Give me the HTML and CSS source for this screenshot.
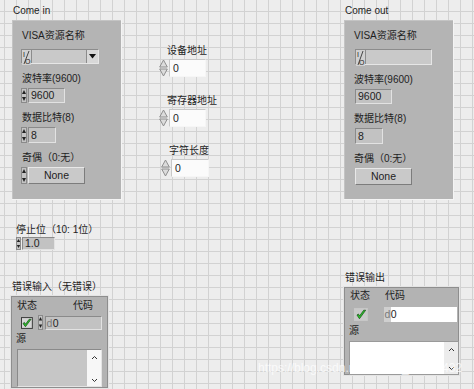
FILE: index.html
```html
<!DOCTYPE html>
<html lang="zh-CN">
<head>
    <meta charset="UTF-8">
    <title>串口设置</title>
    <link rel="stylesheet" href="styles.css">
</head>
<body>
    <div class="panel">

        <!-- Come in -->
        <div class="block come-in">
            <div class="caption">Come in</div>
            <div class="cluster">
                <div class="lbl">VISA资源名称</div>
                <div class="visa">
                    <svg class="io" width="9" height="15" viewBox="0 0 9 15"><text x="1" y="7" font-size="7" font-family="Liberation Sans">I</text><path d="M7 1 L2 14" stroke="#222" stroke-width="0.8"/><text x="3" y="14" font-size="7" font-family="Liberation Sans">O</text></svg>
                    <div class="visa-field"></div>
                    <div class="visa-btn"><svg width="7" height="5" viewBox="0 0 7 5"><path d="M0 0 H7 L3.5 4.5Z" fill="#111"/></svg></div>
                </div>

                <div class="lbl gap">波特率(9600)</div>
                <div class="num">
                    <svg class="spin" width="6" height="15" viewBox="0 0 6 15"><rect x="0.5" y="0.5" width="5" height="14" fill="#c4c4c4" stroke="#8a8a8a"/><path d="M3 2 L5 6 H1Z" fill="#222"/><path d="M3 13 L5 9 H1Z" fill="#222"/></svg>
                    <div class="box w37">9600</div>
                </div>

                <div class="lbl gap">数据比特(8)</div>
                <div class="num">
                    <svg class="spin" width="6" height="16" viewBox="0 0 6 16"><rect x="0.5" y="0.5" width="5" height="15" fill="#c4c4c4" stroke="#8a8a8a"/><path d="M3 2 L5 6 H1Z" fill="#222"/><path d="M3 14 L5 10 H1Z" fill="#222"/></svg>
                    <div class="box w28 h16">8</div>
                </div>

                <div class="lbl gap">奇偶（0:无）</div>
                <div class="num">
                    <svg class="spin" width="6" height="17" viewBox="0 0 6 17"><rect x="0.5" y="0.5" width="5" height="16" fill="#c4c4c4" stroke="#8a8a8a"/><path d="M3 2 L5 6 H1Z" fill="#222"/><path d="M3 15 L5 11 H1Z" fill="#222"/></svg>
                    <div class="ring">None</div>
                </div>
            </div>
        </div>

        <!-- Come out -->
        <div class="block come-out">
            <div class="caption">Come out</div>
            <div class="cluster">
                <div class="lbl">VISA资源名称</div>
                <div class="visa out">
                    <svg class="io" width="9" height="16" viewBox="0 0 9 16"><text x="1" y="7" font-size="7" font-family="Liberation Sans">I</text><path d="M7 1 L2 15" stroke="#222" stroke-width="0.8"/><text x="3" y="15" font-size="7" font-family="Liberation Sans">O</text></svg>
                    <div class="visa-field"></div>
                </div>

                <div class="lbl gap">波特率(9600)</div>
                <div class="num ind">
                    <div class="box w37">9600</div>
                </div>

                <div class="lbl gap">数据比特(8)</div>
                <div class="num ind">
                    <div class="box w28 h16">8</div>
                </div>

                <div class="lbl gap">奇偶（0:无）</div>
                <div class="num ind">
                    <div class="ring">None</div>
                </div>
            </div>
        </div>

        <!-- Modbus numerics -->
        <div class="block mid mid-1">
            <div class="lbl">设备地址</div>
            <div class="wnum">
                <svg width="9" height="18" viewBox="0 0 9 18"><path d="M4.5 1 L8.3 8 H0.7Z" fill="#dcdcdc" stroke="#8e8e8e"/><path d="M4.5 17 L8.3 10 H0.7Z" fill="#dcdcdc" stroke="#8e8e8e"/></svg>
                <div class="wbox">0</div>
            </div>
        </div>
        <div class="block mid mid-2">
            <div class="lbl">寄存器地址</div>
            <div class="wnum">
                <svg width="9" height="18" viewBox="0 0 9 18"><path d="M4.5 1 L8.3 8 H0.7Z" fill="#dcdcdc" stroke="#8e8e8e"/><path d="M4.5 17 L8.3 10 H0.7Z" fill="#dcdcdc" stroke="#8e8e8e"/></svg>
                <div class="wbox">0</div>
            </div>
        </div>
        <div class="block mid mid-3">
            <div class="lbl">字符长度</div>
            <div class="wnum">
                <svg width="9" height="18" viewBox="0 0 9 18"><path d="M4.5 1 L8.3 8 H0.7Z" fill="#dcdcdc" stroke="#8e8e8e"/><path d="M4.5 17 L8.3 10 H0.7Z" fill="#dcdcdc" stroke="#8e8e8e"/></svg>
                <div class="wbox">0</div>
            </div>
        </div>

        <!-- Stop bits -->
        <div class="block stop">
            <div class="lbl">停止位（10: 1位）</div>
            <div class="num">
                <svg class="spin" width="5" height="13" viewBox="0 0 5 13"><rect x="0.5" y="0.5" width="4" height="12" fill="#c4c4c4" stroke="#8a8a8a"/><path d="M2.5 2 L4.2 5 H0.8Z" fill="#222"/><path d="M2.5 11 L4.2 8 H0.8Z" fill="#222"/></svg>
                <div class="box w33 h13">1.0</div>
            </div>
        </div>

        <!-- Error in -->
        <div class="block err-in">
            <div class="caption">错误输入（无错误）</div>
            <div class="ecluster">
                <div class="erow">
                    <span class="st">状态</span>
                    <span class="code-lbl">代码</span>
                </div>
                <div class="erow2">
                    <svg class="check" width="12" height="12" viewBox="0 0 12 12"><rect x="0.5" y="0.5" width="11" height="11" fill="#d6d6d6" stroke="#3a3a3a"/><path d="M2 6.5 L4.5 9.8 L10.2 2.2 L8.3 2.2 L4.6 7.2 L3.5 5.4Z" fill="#2cc42c" stroke="#124812" stroke-width="0.7"/></svg>
                    <svg class="spin" width="5" height="15" viewBox="0 0 5 15"><rect x="0.5" y="0.5" width="4" height="14" fill="#c4c4c4" stroke="#8a8a8a"/><path d="M2.5 2 L4.2 5.5 H0.8Z" fill="#222"/><path d="M2.5 13 L4.2 9.5 H0.8Z" fill="#222"/></svg>
                    <div class="box code"><span class="radix">d</span>0</div>
                </div>
                <div class="lbl">源</div>
                <div class="strbox">
                    <div class="scroll">
                        <svg width="7" height="5" viewBox="0 0 7 5"><path d="M1 4 L3.5 1.5 L6 4" fill="none" stroke="#333" stroke-width="1"/></svg>
                        <svg width="7" height="5" viewBox="0 0 7 5"><path d="M1 1 L3.5 3.5 L6 1" fill="none" stroke="#333" stroke-width="1"/></svg>
                    </div>
                </div>
            </div>
        </div>

        <!-- Error out -->
        <div class="block err-out">
            <div class="caption">错误输出</div>
            <div class="ecluster">
                <div class="erow">
                    <span class="st">状态</span>
                    <span class="code-lbl">代码</span>
                </div>
                <div class="erow2">
                    <svg class="check" width="14" height="13" viewBox="0 0 14 13"><rect x="0" y="0" width="14" height="13" fill="#c9c9c9"/><path d="M3 7 L5.5 10.8 L11.8 2.2 L9.8 2.2 L5.6 8 L4.5 6Z" fill="#2cc42c" stroke="#124812" stroke-width="0.7"/></svg>
                    <div class="wcode"><span class="radix">d</span>0</div>
                </div>
                <div class="lbl">源</div>
                <div class="strbox white">
                    <div class="scroll">
                        <svg width="7" height="5" viewBox="0 0 7 5"><path d="M1 4 L3.5 1.5 L6 4" fill="none" stroke="#333" stroke-width="1"/></svg>
                        <svg width="7" height="5" viewBox="0 0 7 5"><path d="M1 1 L3.5 3.5 L6 1" fill="none" stroke="#333" stroke-width="1"/></svg>
                    </div>
                </div>
            </div>
        </div>

        <div class="mark">https://blog.csdn.net/weixin_48619432</div>
    </div>
</body>
</html>
```

FILE: styles.css
```css
body {
    margin: 0;
    padding: 0;
    font-family: "Liberation Sans", "Noto Sans CJK SC", sans-serif;
    font-size: 10px;
    color: #1e1e1e;
}

.panel {
    position: relative;
    width: 474px;
    height: 389px;
    overflow: hidden;
    background-color: #ededed;
    background-image:
        linear-gradient(to right, #d2d2d2 1px, transparent 1px),
        linear-gradient(to bottom, #d2d2d2 1px, transparent 1px);
    background-size: 12px 12px;
    background-position: 4px 11px;
}

/* free canvas: each front panel object sits at its own spot */
.block {
    position: absolute;
}

.come-in { left: 12px; top: 4px; }
.come-out { left: 344px; top: 4px; }
.mid-1 { left: 159px; top: 44px; }
.mid-2 { left: 159px; top: 94px; }
.mid-3 { left: 161px; top: 144px; }
.stop { left: 16px; top: 223px; }
.err-in { left: 11px; top: 280px; }
.err-out { left: 344px; top: 271px; }

.caption {
    height: 16px;
    line-height: 14px;
    padding-left: 1px;
}

.lbl {
    line-height: 14px;
    white-space: nowrap;
}

.cluster {
    width: 110px;
    height: 180px;
    padding: 9px 0 0 9px;
    box-sizing: border-box;
    background-color: #b4b4b4;
    border-right: 1px solid #f4f4f4;
    border-bottom: 1px solid #f4f4f4;
    box-shadow: inset 1px 1px 0 #c4c4c4;
}

.cluster .lbl {
    padding-left: 1px;
}

.cluster .gap {
    margin-top: 8px;
    margin-bottom: 2px;
}

/* VISA resource */
.visa {
    display: flex;
    align-items: stretch;
    width: 78px;
    height: 15px;
    margin-top: 6px;
    background-color: #c9c9c9;
    border: 1px solid #8c8c8c;
    border-right-color: #e6e6e6;
    border-bottom-color: #e6e6e6;
    box-sizing: border-box;
}

.visa.out {
    width: 77px;
    height: 16px;
    margin-left: 2px;
}

.io {
    flex: none;
    fill: #222;
    background-color: #d0d0d0;
}

.visa-field {
    flex: 1;
    border-left: 1px solid #8c8c8c;
}

.visa-btn {
    width: 11px;
    display: flex;
    align-items: center;
    justify-content: center;
    background-color: #d8d8d8;
    border-left: 1px solid #8c8c8c;
}

/* numeric controls */
.num {
    display: flex;
    align-items: center;
}

.num.ind {
    padding-left: 2px;
}

.spin {
    flex: none;
    margin-right: 1px;
}

.box {
    height: 15px;
    line-height: 13px;
    padding-left: 2px;
    box-sizing: border-box;
    background-color: #c2c2c2;
    border: 1px solid #8a8a8a;
    border-right-color: #e2e2e2;
    border-bottom-color: #e2e2e2;
    font-size: 10.5px;
}

.w37 { width: 37px; }
.w28 { width: 28px; }
.w33 { width: 33px; }
.h16 { height: 16px; line-height: 14px; }
.h13 { height: 13px; line-height: 11px; }

.ring {
    width: 57px;
    height: 17px;
    line-height: 15px;
    text-align: center;
    box-sizing: border-box;
    background-color: #c9c9c9;
    border: 1px solid #e8e8e8;
    border-right-color: #7c7c7c;
    border-bottom-color: #7c7c7c;
    font-size: 10.5px;
}

/* white numerics in the middle */
.mid .lbl {
    padding-left: 8px;
    margin-bottom: 1px;
}

.wnum {
    display: flex;
    align-items: center;
}

.wnum svg {
    flex: none;
    margin-right: 1px;
}

.wbox {
    width: 37px;
    height: 18px;
    line-height: 16px;
    padding-left: 3px;
    box-sizing: border-box;
    background-color: #fbfbfb;
    border: 1px solid #c8c8c8;
    border-right-color: #f6f6f6;
    border-bottom-color: #f6f6f6;
    font-size: 10.5px;
}

.mid-3 .wbox {
    width: 38px;
}

/* error clusters */
.ecluster {
    background-color: #b3b3b3;
    border: 1px solid #8e8e8e;
    box-shadow: 0 0 0 1px #e4e4e4;
    box-sizing: border-box;
}

.err-in .ecluster {
    width: 97px;
    height: 92px;
    padding: 2px 5px 0 3px;
}

.err-out .ecluster {
    width: 115px;
    height: 88px;
    padding: 1px 1px 0 3px;
}

.erow {
    display: flex;
    line-height: 14px;
}

.erow .st {
    margin-left: 2px;
}

.err-in .code-lbl {
    margin-left: 36px;
}

.err-out .code-lbl {
    margin-left: 15px;
}

.erow2 {
    display: flex;
    align-items: center;
    margin-top: 2px;
    height: 15px;
}

.err-in .check {
    margin-left: 6px;
    margin-right: 5px;
}

.err-in .spin {
    margin-right: 2px;
}

.box.code {
    width: 58px;
    height: 14px;
    line-height: 12px;
    padding-left: 0;
}

.radix {
    display: inline-block;
    width: 7px;
    color: #7a7a7a;
    text-align: center;
}

.err-out .erow2 {
    margin-top: 3px;
    height: 16px;
}

.err-out .check {
    margin-left: 6px;
    margin-right: 16px;
}

.wcode {
    width: 74px;
    height: 15px;
    line-height: 14px;
    background-color: #ffffff;
    box-sizing: border-box;
    font-size: 10.5px;
}

.wcode .radix {
    background-color: #cfcfcf;
    height: 15px;
}

.ecluster .lbl {
    margin-top: 2px;
    padding-left: 1px;
}

.strbox {
    display: flex;
    justify-content: flex-end;
    margin-top: 3px;
    margin-left: 2px;
    width: 85px;
    height: 38px;
    box-sizing: border-box;
    background-color: #c6c6c6;
    border: 1px solid #8a8a8a;
    border-right-color: #e4e4e4;
    border-bottom-color: #e4e4e4;
}

.strbox.white {
    margin-left: 1px;
    width: 110px;
    height: 34px;
    background-color: #ffffff;
    border-color: #9a9a9a;
}

.scroll {
    width: 14px;
    padding: 5px 0 3px;
    box-sizing: border-box;
    display: flex;
    flex-direction: column;
    justify-content: space-between;
    align-items: center;
    background-color: #f7f7f7;
}

.strbox.white .scroll {
    background-color: #ececec;
}

.mark {
    position: absolute;
    left: 258px;
    top: 361px;
    font-size: 12px;
    color: rgba(255, 255, 255, 0.75);
    white-space: nowrap;
}
```
